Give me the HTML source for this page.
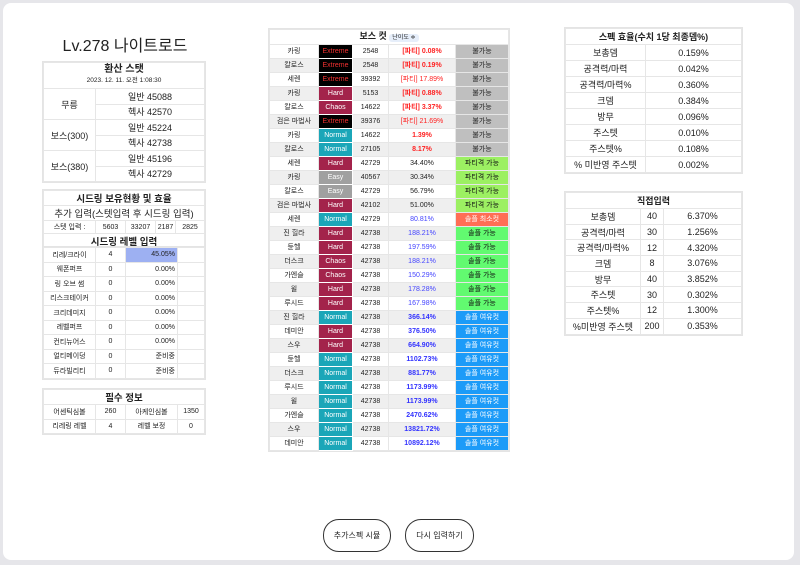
<!DOCTYPE html>
<html><head><meta charset="utf-8">
<style>
*{box-sizing:border-box;margin:0;padding:0}
body{width:800px;height:565px;background:#e6e6ea;font-family:"Liberation Sans","Noto Sans CJK KR",sans-serif;color:#222;position:relative;overflow:hidden}
.card{position:absolute;left:3px;top:3px;width:791px;height:557px;background:#fff;border-radius:8px}
.abs{position:absolute}
table{border-collapse:collapse;table-layout:fixed;position:absolute;background:#fff;box-shadow:0 0 0 1px #e4e4e4}
td{border:1px solid #e6e6e6;text-align:center;font-size:8px;padding:0;white-space:nowrap;overflow:hidden}
.b td{font-size:7px}
.boss td{font-size:7px;height:14px;line-height:12px}
.boss tr:nth-child(odd) td.n{background:#efefef}
.d{color:#fff;border:1px solid #fff}
.X{background:#000;color:#f03030}
.H{background:#a3234b}
.N{background:#1ba6b8}
.E{background:#a0a0a0}
.s0{background:#bfbfbf;color:#222}
.s1{background:#9cf062;color:#111}
.s2{background:#ff6e55;color:#fff}
.s3{background:#62fa70;color:#111}
.s4{background:#1c9bf8;color:#fff}
.r{color:#f22}.rb{color:#f22;font-weight:bold}.bl{color:#44f}.bb{color:#33f;font-weight:bold}
.btn{position:absolute;top:519px;height:33px;border:1px solid #333;border-radius:16px;font-size:8px;display:flex;align-items:center;justify-content:center;background:#fff}
</style></head><body>
<div class="card"></div>
<div class="abs" style="left:40px;top:32px;width:170px;text-align:center;font-size:16px;color:#222">Lv.278 나이트로드</div>

<table style="left:43px;top:62px;width:162px">
<col style="width:52px"><col>
<tr><td colspan="2" style="height:26px;line-height:10px"><b style="font-size:10px">환산 스탯</b><br><span style="font-size:6.5px">2023. 12. 11. 오전 1:08:30</span></td></tr>
<tr><td rowspan="2" style="font-size:9px">무릉</td><td style="height:15.5px;font-size:9px">일반 45088</td></tr>
<tr><td style="height:15.5px;font-size:9px">헥사 42570</td></tr>
<tr><td rowspan="2" style="font-size:9px">보스(300)</td><td style="height:15.5px;font-size:9px">일반 45224</td></tr>
<tr><td style="height:15.5px;font-size:9px">헥사 42738</td></tr>
<tr><td rowspan="2" style="font-size:9px">보스(380)</td><td style="height:15.5px;font-size:9px">일반 45196</td></tr>
<tr><td style="height:15.5px;font-size:9px">헥사 42729</td></tr>
</table>

<table class="b" style="left:43px;top:190px;width:162px">
<col style="width:52px"><col style="width:30px"><col style="width:30px"><col style="width:20px"><col>
<tr><td colspan="5" style="height:14px;font-size:9.5px;font-weight:bold">시드링 보유현황 및 효율</td></tr>
<tr><td colspan="5" style="height:15px;font-size:9.5px">추가 입력(스텟입력 후 시드링 입력)</td></tr>
<tr><td style="height:13px">스텟 입력 :</td><td>5603</td><td>33207</td><td colspan="1">2187</td><td>2825</td></tr>
<tr><td colspan="5" style="height:15px;font-size:9.5px;font-weight:bold">시드링 레벨 입력</td></tr>
</table>
<table class="b" style="left:43px;top:247px;width:162px">
<col style="width:52px"><col style="width:30px"><col style="width:52px"><col>
<tr><td style="height:14.5px">리레/크라이</td><td>4</td><td style="background:#9db0f2;text-align:right;padding-right:2px">45.05%</td><td></td></tr>
<tr><td style="height:14.5px">웨폰퍼프</td><td>0</td><td style="text-align:right;padding-right:2px">0.00%</td><td></td></tr>
<tr><td style="height:14.5px">링 오브 썸</td><td>0</td><td style="text-align:right;padding-right:2px">0.00%</td><td></td></tr>
<tr><td style="height:14.5px">리스크테이커</td><td>0</td><td style="text-align:right;padding-right:2px">0.00%</td><td></td></tr>
<tr><td style="height:14.5px">크리데미지</td><td>0</td><td style="text-align:right;padding-right:2px">0.00%</td><td></td></tr>
<tr><td style="height:14.5px">레벨퍼프</td><td>0</td><td style="text-align:right;padding-right:2px">0.00%</td><td></td></tr>
<tr><td style="height:14.5px">컨티뉴어스</td><td>0</td><td style="text-align:right;padding-right:2px">0.00%</td><td></td></tr>
<tr><td style="height:14.5px">얼티메이덩</td><td>0</td><td style="text-align:right;padding-right:2px">준비중</td><td></td></tr>
<tr><td style="height:14.5px">듀라빌리티</td><td>0</td><td style="text-align:right;padding-right:2px">준비중</td><td></td></tr>
</table>

<table class="b" style="left:43px;top:389px;width:162px">
<col style="width:52px"><col style="width:30px"><col style="width:52px"><col>
<tr><td colspan="4" style="height:15px;font-size:9.5px;font-weight:bold">필수 정보</td></tr>
<tr><td style="height:14.5px">어센틱심볼</td><td>260</td><td>아케인심볼</td><td>1350</td></tr>
<tr><td style="height:14.5px">리레링 레벨</td><td>4</td><td>레벨 보정</td><td>0</td></tr>
</table>

<table class="boss" style="left:269px;top:29px;width:240px">
<col style="width:49px"><col style="width:34px"><col style="width:36px"><col style="width:67px"><col>
<tr><td colspan="5" style="height:14px;font-size:9px;font-weight:bold;background:#fff">보스 컷 <span style="font-size:6px;font-weight:normal;background:#e6eefa;border-radius:3px;padding:1px 3px">난이도 ≑</span></td></tr>
<tr><td class="n">카링</td><td class="d X">Extreme</td><td class="n">2548</td><td class="n rb">[파티] 0.08%</td><td class="s0">불가능</td></tr>
<tr><td class="n">칼로스</td><td class="d X">Extreme</td><td class="n">2548</td><td class="n rb">[파티] 0.19%</td><td class="s0">불가능</td></tr>
<tr><td class="n">세렌</td><td class="d X">Extreme</td><td class="n">39392</td><td class="n r">[파티] 17.89%</td><td class="s0">불가능</td></tr>
<tr><td class="n">카링</td><td class="d H">Hard</td><td class="n">5153</td><td class="n rb">[파티] 0.88%</td><td class="s0">불가능</td></tr>
<tr><td class="n">칼로스</td><td class="d H">Chaos</td><td class="n">14622</td><td class="n rb">[파티] 3.37%</td><td class="s0">불가능</td></tr>
<tr><td class="n">검은 마법사</td><td class="d X">Extreme</td><td class="n">39376</td><td class="n r">[파티] 21.69%</td><td class="s0">불가능</td></tr>
<tr><td class="n">카링</td><td class="d N">Normal</td><td class="n">14622</td><td class="n rb">1.39%</td><td class="s0">불가능</td></tr>
<tr><td class="n">칼로스</td><td class="d N">Normal</td><td class="n">27105</td><td class="n rb">8.17%</td><td class="s0">불가능</td></tr>
<tr><td class="n">세렌</td><td class="d H">Hard</td><td class="n">42729</td><td class="n">34.40%</td><td class="s1">파티격 가능</td></tr>
<tr><td class="n">카링</td><td class="d E">Easy</td><td class="n">40567</td><td class="n">30.34%</td><td class="s1">파티격 가능</td></tr>
<tr><td class="n">칼로스</td><td class="d E">Easy</td><td class="n">42729</td><td class="n">56.79%</td><td class="s1">파티격 가능</td></tr>
<tr><td class="n">검은 마법사</td><td class="d H">Hard</td><td class="n">42102</td><td class="n">51.00%</td><td class="s1">파티격 가능</td></tr>
<tr><td class="n">세렌</td><td class="d N">Normal</td><td class="n">42729</td><td class="n bl">80.81%</td><td class="s2">솔플 최소컷</td></tr>
<tr><td class="n">진 힐라</td><td class="d H">Hard</td><td class="n">42738</td><td class="n bl">188.21%</td><td class="s3">솔플 가능</td></tr>
<tr><td class="n">듄헬</td><td class="d H">Hard</td><td class="n">42738</td><td class="n bl">197.59%</td><td class="s3">솔플 가능</td></tr>
<tr><td class="n">더스크</td><td class="d H">Chaos</td><td class="n">42738</td><td class="n bl">188.21%</td><td class="s3">솔플 가능</td></tr>
<tr><td class="n">가엔슬</td><td class="d H">Chaos</td><td class="n">42738</td><td class="n bl">150.29%</td><td class="s3">솔플 가능</td></tr>
<tr><td class="n">윌</td><td class="d H">Hard</td><td class="n">42738</td><td class="n bl">178.28%</td><td class="s3">솔플 가능</td></tr>
<tr><td class="n">루시드</td><td class="d H">Hard</td><td class="n">42738</td><td class="n bl">167.98%</td><td class="s3">솔플 가능</td></tr>
<tr><td class="n">진 힐라</td><td class="d N">Normal</td><td class="n">42738</td><td class="n bb">366.14%</td><td class="s4">솔플 여유컷</td></tr>
<tr><td class="n">데미안</td><td class="d H">Hard</td><td class="n">42738</td><td class="n bb">376.50%</td><td class="s4">솔플 여유컷</td></tr>
<tr><td class="n">스우</td><td class="d H">Hard</td><td class="n">42738</td><td class="n bb">664.90%</td><td class="s4">솔플 여유컷</td></tr>
<tr><td class="n">듄헬</td><td class="d N">Normal</td><td class="n">42738</td><td class="n bb">1102.73%</td><td class="s4">솔플 여유컷</td></tr>
<tr><td class="n">더스크</td><td class="d N">Normal</td><td class="n">42738</td><td class="n bb">881.77%</td><td class="s4">솔플 여유컷</td></tr>
<tr><td class="n">루시드</td><td class="d N">Normal</td><td class="n">42738</td><td class="n bb">1173.99%</td><td class="s4">솔플 여유컷</td></tr>
<tr><td class="n">윌</td><td class="d N">Normal</td><td class="n">42738</td><td class="n bb">1173.99%</td><td class="s4">솔플 여유컷</td></tr>
<tr><td class="n">가엔슬</td><td class="d N">Normal</td><td class="n">42738</td><td class="n bb">2470.62%</td><td class="s4">솔플 여유컷</td></tr>
<tr><td class="n">스우</td><td class="d N">Normal</td><td class="n">42738</td><td class="n bb">13821.72%</td><td class="s4">솔플 여유컷</td></tr>
<tr><td class="n">데미안</td><td class="d N">Normal</td><td class="n">42738</td><td class="n bb">10892.12%</td><td class="s4">솔플 여유컷</td></tr>
</table>

<table style="left:565px;top:28px;width:177px">
<col style="width:80px"><col>
<tr><td colspan="2" style="height:16px;font-size:9px;font-weight:bold">스펙 효율(수치 1당 최종뎀%)</td></tr>
<tr><td style="height:16px;font-size:9px">보총뎀</td><td style="font-size:9px">0.159%</td></tr>
<tr><td style="height:16px;font-size:9px">공격력/마력</td><td style="font-size:9px">0.042%</td></tr>
<tr><td style="height:16px;font-size:9px">공격력/마력%</td><td style="font-size:9px">0.360%</td></tr>
<tr><td style="height:16px;font-size:9px">크뎀</td><td style="font-size:9px">0.384%</td></tr>
<tr><td style="height:16px;font-size:9px">방무</td><td style="font-size:9px">0.096%</td></tr>
<tr><td style="height:16px;font-size:9px">주스텟</td><td style="font-size:9px">0.010%</td></tr>
<tr><td style="height:16px;font-size:9px">주스텟%</td><td style="font-size:9px">0.108%</td></tr>
<tr><td style="height:16px;font-size:9px">% 미반영 주스텟</td><td style="font-size:9px">0.002%</td></tr>
</table>

<table style="left:565px;top:192px;width:177px">
<col style="width:75px"><col style="width:23px"><col>
<tr><td colspan="3" style="height:16px;font-size:9px;font-weight:bold">직접입력</td></tr>
<tr><td style="height:15.7px;font-size:9px">보총뎀</td><td style="font-size:9px">40</td><td style="font-size:9px">6.370%</td></tr>
<tr><td style="height:15.7px;font-size:9px">공격력/마력</td><td style="font-size:9px">30</td><td style="font-size:9px">1.256%</td></tr>
<tr><td style="height:15.7px;font-size:9px">공격력/마력%</td><td style="font-size:9px">12</td><td style="font-size:9px">4.320%</td></tr>
<tr><td style="height:15.7px;font-size:9px">크뎀</td><td style="font-size:9px">8</td><td style="font-size:9px">3.076%</td></tr>
<tr><td style="height:15.7px;font-size:9px">방무</td><td style="font-size:9px">40</td><td style="font-size:9px">3.852%</td></tr>
<tr><td style="height:15.7px;font-size:9px">주스텟</td><td style="font-size:9px">30</td><td style="font-size:9px">0.302%</td></tr>
<tr><td style="height:15.7px;font-size:9px">주스텟%</td><td style="font-size:9px">12</td><td style="font-size:9px">1.300%</td></tr>
<tr><td style="height:15.7px;font-size:9px">%미반영 주스텟</td><td style="font-size:9px">200</td><td style="font-size:9px">0.353%</td></tr>
</table>

<div class="btn" style="left:323px;width:68px">추가스펙 시뮬</div>
<div class="btn" style="left:405px;width:69px">다시 입력하기</div>
</body></html>
